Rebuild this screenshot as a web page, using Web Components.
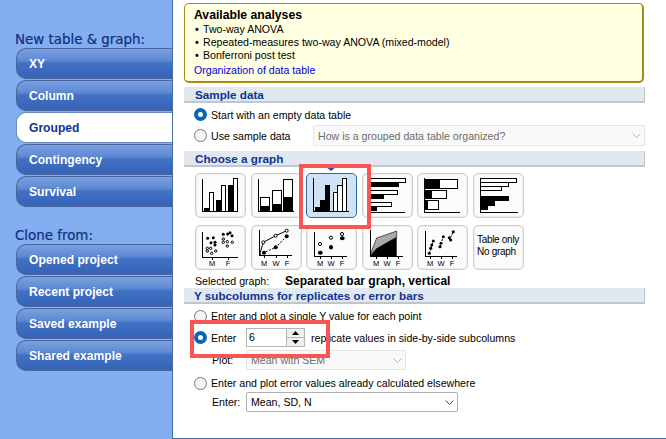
<!DOCTYPE html>
<html>
<head>
<meta charset="utf-8">
<title>New table</title>
<style>
  html, body { margin: 0; padding: 0; height: 100%; overflow: hidden; background: #fff; }
  body { font-family: "Liberation Sans", Arial, sans-serif; }
</style>
</head>
<body>
<pz-app></pz-app>

<template id="icons">
  <svg data-name="bars" width="51" height="45" viewBox="0 0 51 45" shape-rendering="crispEdges">
    <path d="M7.5 6V38.5H43" fill="none" stroke="#000"/>
    <g fill="#000"><rect x="9" y="35" width="5" height="4"/><rect x="21" y="27" width="5" height="12"/><rect x="33" y="12" width="5" height="27"/></g>
    <g fill="#fff" stroke="#000"><rect x="14.5" y="19.5" width="4" height="19"/><rect x="26.5" y="12.5" width="4" height="26"/><rect x="38.5" y="5.5" width="4" height="33"/></g>
  </svg>
  <svg data-name="stacked" width="51" height="45" viewBox="0 0 51 45" shape-rendering="crispEdges">
    <path d="M7.5 6V38.5H43" fill="none" stroke="#000"/>
    <g fill="#fff" stroke="#000"><rect x="9.5" y="24.5" width="9" height="14"/><rect x="21.5" y="17.5" width="9" height="21"/><rect x="32.5" y="6.5" width="9" height="32"/></g>
    <g fill="#000"><rect x="9" y="33" width="10" height="6"/><rect x="21" y="31" width="10" height="8"/><rect x="32" y="24" width="10" height="15"/></g>
  </svg>
  <svg data-name="separated" width="51" height="45" viewBox="0 0 51 45" shape-rendering="crispEdges">
    <path d="M7.5 5V38.5H43" fill="none" stroke="#000"/>
    <g fill="#000"><rect x="9" y="34" width="5" height="5"/><rect x="14" y="27" width="5" height="12"/><rect x="19" y="12" width="5" height="27"/></g>
    <g fill="#fff" stroke="#000"><rect x="27.5" y="19.5" width="4" height="19"/><rect x="31.5" y="12.5" width="5" height="26"/><rect x="36.5" y="5.5" width="4" height="33"/></g>
  </svg>
  <svg data-name="hbars" width="51" height="45" viewBox="0 0 51 45" shape-rendering="crispEdges">
    <path d="M8.5 5V39.5H43" fill="none" stroke="#000"/>
    <g fill="#fff" stroke="#000"><rect x="8.5" y="5.5" width="35" height="4"/><rect x="8.5" y="17.5" width="27" height="4"/><rect x="8.5" y="29.5" width="21" height="4"/></g>
    <g fill="#000"><rect x="8" y="10" width="29" height="4"/><rect x="8" y="22" width="14" height="4"/><rect x="8" y="34" width="7" height="4"/></g>
  </svg>
  <svg data-name="hstacked" width="51" height="45" viewBox="0 0 51 45" shape-rendering="crispEdges">
    <path d="M7.5 5V39.5H43" fill="none" stroke="#000"/>
    <g fill="#fff" stroke="#000"><rect x="7.5" y="6.5" width="33" height="9"/><rect x="7.5" y="17.5" width="22" height="8"/><rect x="7.5" y="27.5" width="14" height="9"/></g>
    <g fill="#000"><rect x="8" y="6" width="15" height="10"/><rect x="8" y="17" width="7" height="9"/><rect x="8" y="27" width="3" height="10"/></g>
  </svg>
  <svg data-name="hseparated" width="51" height="45" viewBox="0 0 51 45" shape-rendering="crispEdges">
    <path d="M7.5 5V39.5H45" fill="none" stroke="#000"/>
    <g fill="#fff" stroke="#000"><rect x="7.5" y="5.5" width="36" height="4"/><rect x="7.5" y="9.5" width="28" height="4"/><rect x="7.5" y="13.5" width="21" height="4"/></g>
    <g fill="#000"><rect x="8" y="23" width="28" height="5"/><rect x="8" y="28" width="14" height="5"/><rect x="8" y="33" width="7" height="4"/></g>
  </svg>
  <svg data-name="scatter" width="51" height="45" viewBox="0 0 51 45">
    <path d="M7.5 7V32.5H43M17.5 32.5V35M33.5 32.5V35" fill="none" stroke="#000" shape-rendering="crispEdges"/>
    <g fill="#000"><circle cx="12.7" cy="13.3" r="1.5"/><circle cx="18.3" cy="12.7" r="1.5"/><circle cx="16" cy="17.7" r="1.5"/><circle cx="20" cy="17.3" r="1.5"/><circle cx="20" cy="20" r="1.5"/><circle cx="28.3" cy="9.3" r="1.5"/><circle cx="32.7" cy="9" r="1.5"/><circle cx="35" cy="7.7" r="1.5"/><circle cx="37" cy="10.7" r="1.5"/></g>
    <g fill="#fff" stroke="#000"><circle cx="12.3" cy="23.3" r="1.2"/><circle cx="15.7" cy="23.3" r="1.2"/><circle cx="12.3" cy="26" r="1.2"/><circle cx="16.7" cy="28.3" r="1.2"/><circle cx="20.7" cy="26" r="1.2"/><circle cx="28.3" cy="14" r="1.2"/><circle cx="28.3" cy="17.3" r="1.2"/><circle cx="32.3" cy="16.7" r="1.2"/><circle cx="37.3" cy="17.3" r="1.2"/><circle cx="32.3" cy="21" r="1.2"/></g>
    <g font-family="Liberation Sans" font-size="7.5" text-anchor="middle"><text x="17" y="41">M</text><text x="33" y="41">F</text></g>
  </svg>
  <svg data-name="line" width="51" height="45" viewBox="0 0 51 45">
    <path d="M8.5 5V30.5H41M13.5 30.5V33M25.5 30.5V33M36.5 30.5V33" fill="none" stroke="#000" shape-rendering="crispEdges"/>
    <path d="M8.5 30L12.3 17.3L24.7 10.7L35.7 5.7" fill="none" stroke="#000"/>
    <path d="M8.5 30L13 27.7L24.7 22.3L35.7 11.3" fill="none" stroke="#000" stroke-dasharray="2 1.5"/>
    <g fill="#fff" stroke="#000"><circle cx="12.3" cy="17.3" r="1.5"/><circle cx="24.7" cy="10.7" r="1.5"/><circle cx="35.7" cy="5.7" r="1.5"/></g>
    <g fill="#000"><circle cx="13" cy="27.7" r="2"/><circle cx="24.7" cy="22.3" r="2"/><circle cx="35.7" cy="11.3" r="2"/></g>
    <g font-family="Liberation Sans" font-size="7.5" text-anchor="middle"><text x="13" y="41">M</text><text x="25" y="41">W</text><text x="36" y="41">F</text></g>
  </svg>
  <svg data-name="points" width="51" height="45" viewBox="0 0 51 45">
    <path d="M8.5 7V31.5H41M14.5 31.5V34M25.5 31.5V34M36.5 31.5V34" fill="none" stroke="#000" shape-rendering="crispEdges"/>
    <g fill="#fff" stroke="#000"><circle cx="14" cy="19" r="1.6"/><circle cx="25" cy="12.7" r="1.6"/><circle cx="36" cy="9" r="1.6"/></g>
    <g fill="#000"><ellipse cx="14.3" cy="27.7" rx="2.4" ry="2"/><ellipse cx="25" cy="22.3" rx="2" ry="2.3"/><ellipse cx="36.3" cy="13.3" rx="2.3" ry="2"/></g>
    <g font-family="Liberation Sans" font-size="7.5" text-anchor="middle"><text x="14" y="41">M</text><text x="25" y="41">W</text><text x="36" y="41">F</text></g>
  </svg>
  <svg data-name="area" width="51" height="45" viewBox="0 0 51 45">
    <path d="M8 30L14.7 13L34.7 6V12.3L14.7 23.5Z" fill="#a8a8a8" stroke="#000" stroke-width=".6"/>
    <path d="M8 31L14.7 23.5L34.7 12V31Z" fill="#000"/>
    <path d="M8.5 5V31.5H41M14.5 31.5V34M25.5 31.5V34M36.5 31.5V34" fill="none" stroke="#000" shape-rendering="crispEdges"/>
    <g font-family="Liberation Sans" font-size="7.5" text-anchor="middle"><text x="14" y="41">M</text><text x="25" y="41">W</text><text x="36" y="41">F</text></g>
  </svg>
  <svg data-name="groups" width="51" height="45" viewBox="0 0 51 45">
    <path d="M8.5 6V31.5H40M13.5 31.5V34M24.5 31.5V34M35.5 31.5V34" fill="none" stroke="#000" shape-rendering="crispEdges"/>
    <path d="M12.3 28.3L16.3 16M23 21.7L26.3 11.7M32.3 15L36.3 6.7" fill="none" stroke="#000" stroke-dasharray="2 1"/>
    <g fill="#000"><circle cx="12.3" cy="28.3" r="1.5"/><circle cx="13.7" cy="23.3" r="1.5"/><circle cx="14.7" cy="20" r="1.5"/><circle cx="16.3" cy="16" r="1.5"/><circle cx="23" cy="21.7" r="1.5"/><circle cx="24" cy="18.3" r="1.5"/><circle cx="26.3" cy="11.7" r="1.5"/><circle cx="32.3" cy="12.7" r="1.5"/><circle cx="33.7" cy="15" r="1.5"/><circle cx="36.3" cy="6.7" r="1.5"/></g>
    <g font-family="Liberation Sans" font-size="7.5" text-anchor="middle"><text x="13" y="41">M</text><text x="24" y="41">W</text><text x="35" y="41">F</text></g>
  </svg>
</template>

<script>
const FONT = '"Liberation Sans", Arial, sans-serif';
const TITLE = '"DejaVu Sans", sans-serif';

class NavButton extends HTMLElement {
  connectedCallback() {
    this.attachShadow({ mode: 'open' });
    this.shadowRoot.innerHTML = `
      <style>
        :host { display: block; height: 31px; margin-bottom: 1px; }
        .btn {
          box-sizing: border-box;
          height: 31px;
          display: flex;
          align-items: center;
          padding: 1px 0 0 12px;
          font: bold 12.1px ${FONT};
          color: #fff;
          border: 1px solid #4a689f;
          border-right: 0;
          border-radius: 10px 0 0 10px;
          background: linear-gradient(#7aa0e2 0, #5f8ad4 38%, #4170c4 50%, #3563b8 100%);
        }
        :host([active]) .btn {
          background: #fff;
          color: #0f3590;
          border-color: #6c8ac0;
        }
      </style>
      <div class="btn"><slot></slot></div>`;
  }
}
customElements.define('pz-nav-button', NavButton);

class NavGroup extends HTMLElement {
  connectedCallback() {
    this.attachShadow({ mode: 'open' });
    this.shadowRoot.innerHTML = `
      <style>
        :host { display: block; }
        .title {
          height: 16px;
          padding: 1px 0 0 15px;
          margin-bottom: 1px;
          box-sizing: border-box;
          font: 13.4px/16px ${TITLE};
          color: #0f2f7f;
          -webkit-text-stroke: .2px #0f2f7f;
          white-space: nowrap;
        }
        .items { padding-left: 16px; }
      </style>
      <div class="title">${this.getAttribute('title')}</div>
      <div class="items"><slot></slot></div>`;
  }
}
customElements.define('pz-nav-group', NavGroup);

class InfoBox extends HTMLElement {
  connectedCallback() {
    this.attachShadow({ mode: 'open' });
    this.shadowRoot.innerHTML = `
      <style>
        :host {
          display: block;
          box-sizing: border-box;
          height: 80px;
          width: 460px;
          padding: 5px 9px;
          background: #ffffe1;
          border: 1px solid #a68a1c;
          border-width: 1px 2px 2px 1px;
          border-radius: 5px;
          font: 10.6px/13px ${FONT};
          color: #000;
        }
        b { display: block; font: bold 12.2px/13px ${FONT}; margin-bottom: 1px; }
        .item { display: flex; white-space: nowrap; }
        .item::before { content: "\\2022"; width: 9px; padding-left: 1px; box-sizing: border-box; font-weight: bold; }
        a { display: block; margin-top: 2px; color: #0000e0; text-decoration: none; }
      </style>
      <b>Available analyses</b>
      <div class="item">Two-way ANOVA</div>
      <div class="item">Repeated-measures two-way ANOVA (mixed-model)</div>
      <div class="item">Bonferroni post test</div>
      <a href="#">Organization of data table</a>`;
  }
}
customElements.define('pz-info-box', InfoBox);

class SectionHeader extends HTMLElement {
  connectedCallback() {
    this.attachShadow({ mode: 'open' });
    this.shadowRoot.innerHTML = `
      <style>
        :host {
          display: block;
          box-sizing: border-box;
          height: 16px;
          padding-left: var(--inset, 11px);
          background: #e1e8f0;
          border-bottom: 2px solid #c0c6cc;
          border-right: 1px solid #c0c6cc;
          font: bold 11.7px/15px ${FONT};
          color: #0f3590;
          white-space: nowrap;
        }
      </style>
      <slot></slot>`;
  }
}
customElements.define('pz-section-header', SectionHeader);

class RadioOption extends HTMLElement {
  connectedCallback() {
    this.attachShadow({ mode: 'open' });
    this.shadowRoot.innerHTML = `
      <style>
        :host {
          display: flex;
          align-items: center;
          gap: 4px;
          font: 10.6px/14px ${FONT};
          color: #000;
          white-space: nowrap;
        }
        .dot {
          box-sizing: border-box;
          flex: none;
          width: 13px;
          height: 13px;
          border-radius: 50%;
          border: 1px solid #777;
          background: #f4f4f4;
        }
        :host([checked]) .dot {
          border: 4px solid #0a64b8;
          background: #fff;
        }
      </style>
      <span class="dot"></span><slot></slot>`;
  }
}
customElements.define('pz-radio', RadioOption);

class SelectBox extends HTMLElement {
  connectedCallback() {
    this.attachShadow({ mode: 'open' });
    this.shadowRoot.innerHTML = `
      <style>
        :host {
          display: flex;
          align-items: center;
          justify-content: space-between;
          box-sizing: border-box;
          height: 20px;
          padding: 0 3px 0 4px;
          background: #fff;
          border: 1px solid #b0b0b0;
          border-radius: 2px;
          font: 10.6px/14px ${FONT};
          color: #000;
          white-space: nowrap;
        }
        :host([disabled]) {
          background: #f9f9f9;
          border-color: #e4e4e4;
          color: #6d6d6d;
        }
        svg { flex: none; }
        :host([disabled]) path { stroke: #b8b8b8; }
      </style>
      <span><slot></slot></span>
      <svg width="9" height="5" viewBox="0 0 9 5"><path d="M.5.5L4.5 4.5L8.5.5" fill="none" stroke="#444"/></svg>`;
  }
}
customElements.define('pz-select', SelectBox);

class SpinBox extends HTMLElement {
  connectedCallback() {
    this.attachShadow({ mode: 'open' });
    this.shadowRoot.innerHTML = `
      <style>
        :host {
          display: flex;
          box-sizing: border-box;
          width: 59px;
          height: 19px;
          background: #fff;
          border: 1px solid #b4b4b4;
          font: 10.6px/17px ${FONT};
          color: #000;
        }
        .value { flex: 1; padding-left: 2px; }
        .arrows {
          width: 17px;
          display: flex;
          flex-direction: column;
          background: #f0f0f0;
          border-left: 1px solid #b4b4b4;
        }
        .arrows span { flex: 1; display: flex; align-items: center; justify-content: center; }
        .arrows span + span { border-top: 1px solid #b4b4b4; }
      </style>
      <div class="value"><slot></slot></div>
      <div class="arrows">
        <span><svg width="7" height="4" viewBox="0 0 7 4"><path d="M3.5 0L7 4H0Z"/></svg></span>
        <span><svg width="7" height="4" viewBox="0 0 7 4"><path d="M0 0H7L3.5 4Z"/></svg></span>
      </div>`;
  }
}
customElements.define('pz-spin', SpinBox);

class GraphButton extends HTMLElement {
  connectedCallback() {
    this.attachShadow({ mode: 'open' });
    const name = this.getAttribute('icon');
    const icon = name && document.getElementById('icons').content.querySelector(`[data-name="${name}"]`);
    this.shadowRoot.innerHTML = `
      <style>
        :host {
          display: block;
          position: relative;
          box-sizing: border-box;
          width: 51px;
          height: 45px;
          background: #fbfbfb;
          border: 1px solid #cfcfcf;
          box-shadow: inset 0 0 0 1px #ececec;
          border-radius: 5px;
          font: 10px/12px ${FONT};
          letter-spacing: -.3px;
          color: #000;
        }
        :host([selected]) {
          background: #cfe3f7;
          border-color: #2a6aa8;
          box-shadow: none;
        }
        :host([selected])::before {
          content: "";
          position: absolute;
          top: -7px;
          left: 19px;
          border: 5px solid transparent;
          border-top: 4px solid #1f4fa8;
          border-bottom: 0;
        }
        svg { position: absolute; left: -1px; top: -1px; }
        .label { padding: 8px 0 0 3px; white-space: nowrap; }
      </style>
      <div class="label"><slot></slot></div>`;
    if (icon) this.shadowRoot.appendChild(icon.cloneNode(true));
  }
}
customElements.define('pz-graph-button', GraphButton);

class GraphGrid extends HTMLElement {
  connectedCallback() {
    this.attachShadow({ mode: 'open' });
    this.shadowRoot.innerHTML = `
      <style>
        :host {
          display: grid;
          grid-template-columns: repeat(6, 51px);
          column-gap: 4.6px;
          row-gap: 7px;
          padding: 6px 0 0 11px;
        }
      </style>
      <slot></slot>`;
  }
}
customElements.define('pz-graph-grid', GraphGrid);

class Highlight extends HTMLElement {
  connectedCallback() {
    this.attachShadow({ mode: 'open' });
    this.shadowRoot.innerHTML = `
      <style>
        :host {
          position: absolute;
          box-sizing: border-box;
          border: 4px solid #fb5454;
          pointer-events: none;
        }
      </style>`;
  }
}
customElements.define('pz-highlight', Highlight);

class App extends HTMLElement {
  connectedCallback() {
    this.attachShadow({ mode: 'open' });
    this.shadowRoot.innerHTML = `
      <style>
        :host { display: flex; position: relative; width: 666px; height: 439px; overflow: hidden; }
        .side {
          box-sizing: border-box;
          flex: none;
          width: 173px;
          height: 439px;
          padding-top: 31px;
          background: #83aef0;
          border-right: 1px solid #4a6aa0;
        }
        .side pz-nav-group + pz-nav-group { margin-top: 20px; }
        .main {
          box-sizing: border-box;
          flex: none;
          width: 493px;
          height: 439px;
          padding: 3px 0 0 11px;
          border-bottom: 1px solid #4a6aa0;
        }
        .content { width: 461px; }
        pz-section-header { margin-top: 4px; }
        .row { display: flex; align-items: center; padding-left: 10px; white-space: nowrap; font: 10.6px/14px ${FONT}; }
        .sample { height: 44px; display: flex; flex-direction: column; }
        .sample .row { height: 21px; }
        .sample .row:first-child { margin-top: 1px; }
        .sample pz-radio { width: 119px; }
        .sample pz-select { flex: 1; height: 21px; }
        .selected { height: 14px; padding: 4px 0 0 11px; }
        .selected span { width: 90px; }
        .selected b { font: bold 12px/14px ${FONT}; }
        .y1 { height: 16px; margin-top: 4px; }
        .y2 { height: 19px; margin-top: 4px; }
        .y2 pz-radio { width: 52px; }
        .y2 span { margin-left: 6px; }
        .y3 { height: 20px; margin-top: 3px; padding-left: 28px; }
        .y3 span, .y5 span { width: 34px; }
        .y3 pz-select { width: 160px; }
        .y4 { height: 16px; margin-top: 5px; }
        .y5 { height: 20px; margin-top: 1px; padding-left: 28px; }
        .y5 pz-select { width: 212px; }
      </style>
      <div class="side">
        <pz-nav-group title="New table &amp; graph:">
          <pz-nav-button>XY</pz-nav-button>
          <pz-nav-button>Column</pz-nav-button>
          <pz-nav-button active>Grouped</pz-nav-button>
          <pz-nav-button>Contingency</pz-nav-button>
          <pz-nav-button>Survival</pz-nav-button>
        </pz-nav-group>
        <pz-nav-group title="Clone from:">
          <pz-nav-button>Opened project</pz-nav-button>
          <pz-nav-button>Recent project</pz-nav-button>
          <pz-nav-button>Saved example</pz-nav-button>
          <pz-nav-button>Shared example</pz-nav-button>
        </pz-nav-group>
      </div>
      <div class="main">
        <div class="content">
          <pz-info-box></pz-info-box>
          <pz-section-header>Sample data</pz-section-header>
          <div class="sample">
            <div class="row"><pz-radio checked>Start with an empty data table</pz-radio></div>
            <div class="row"><pz-radio>Use sample data</pz-radio><pz-select disabled>How is a grouped data table organized?</pz-select></div>
          </div>
          <pz-section-header>Choose a graph</pz-section-header>
          <pz-graph-grid>
            <pz-graph-button icon="bars"></pz-graph-button>
            <pz-graph-button icon="stacked"></pz-graph-button>
            <pz-graph-button icon="separated" selected></pz-graph-button>
            <pz-graph-button icon="hbars"></pz-graph-button>
            <pz-graph-button icon="hstacked"></pz-graph-button>
            <pz-graph-button icon="hseparated"></pz-graph-button>
            <pz-graph-button icon="scatter"></pz-graph-button>
            <pz-graph-button icon="line"></pz-graph-button>
            <pz-graph-button icon="points"></pz-graph-button>
            <pz-graph-button icon="area"></pz-graph-button>
            <pz-graph-button icon="groups"></pz-graph-button>
            <pz-graph-button>Table only<br>No graph</pz-graph-button>
          </pz-graph-grid>
          <div class="row selected"><span>Selected graph:</span><b>Separated bar graph, vertical</b></div>
          <pz-section-header style="--inset: 10px; margin-top: 0">Y subcolumns for replicates or error bars</pz-section-header>
          <div class="row y1"><pz-radio>Enter and plot a single Y value for each point</pz-radio></div>
          <div class="row y2"><pz-radio checked>Enter</pz-radio><pz-spin>6</pz-spin><span>replicate values in side-by-side subcolumns</span></div>
          <div class="row y3"><span>Plot:</span><pz-select disabled>Mean with SEM</pz-select></div>
          <div class="row y4"><pz-radio>Enter and plot error values already calculated elsewhere</pz-radio></div>
          <div class="row y5"><span>Enter:</span><pz-select>Mean, SD, N</pz-select></div>
        </div>
      </div>
      <pz-highlight style="left:299px;top:164px;width:72px;height:65px"></pz-highlight>
      <pz-highlight style="left:190px;top:320px;width:140px;height:38px"></pz-highlight>`;
  }
}
customElements.define('pz-app', App);
</script>
</body>
</html>
